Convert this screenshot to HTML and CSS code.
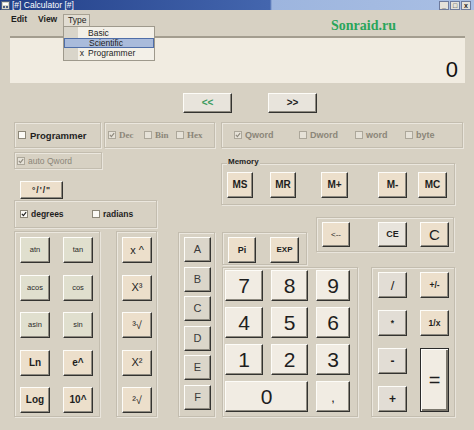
FILE: index.html
```html
<!DOCTYPE html>
<html lang="en">
<head>
    <meta charset="UTF-8">
    <title>[#] Calculator [#]</title>
    <link rel="stylesheet" href="styles.css">
</head>
<body>
    <div class="titlebar">
        <svg class="app-icon" width="9" height="9" viewBox="0 0 9 9"><rect x="0.5" y="0.5" width="8" height="8" fill="#d8d4c8" stroke="#50607f"/><rect x="2" y="2" width="5" height="2" fill="#ffffff"/><rect x="2" y="5" width="2" height="2" fill="#4a5d86"/><rect x="5" y="5" width="2" height="2" fill="#4a5d86"/></svg>
        <span class="title">[#] Calculator [#]</span>
        <div class="winbtns"><span>_</span><span>□</span><span>x</span></div>
    </div>

    <div class="menubar">
        <span class="menu-item m-edit">Edit</span>
        <span class="menu-item m-view">View</span>
        <span class="menu-item m-type">Type
            <div class="dropdown">
                <div class="dd-item"><span class="dd-mark"></span>Basic</div>
                <div class="dd-item sel"><span class="dd-mark"></span>Scientific</div>
                <div class="dd-item"><span class="dd-mark">x</span>Programmer</div>
            </div>
        </span>
        <span class="brand">Sonraid.ru</span>
    </div>

    <div class="display">0</div>

    <div class="nav">
        <button class="btn light nav-btn back">&lt;&lt;</button>
        <button class="btn light nav-btn">&gt;&gt;</button>
    </div>

    <div class="main">
        <div class="col-left">
            <div class="row-top">
                <div class="group prog"><span class="cb"></span><span class="prog-label">Programmer</span></div>
                <div class="group base">
                    <span class="opt w36"><span class="cb dis"><svg viewBox="0 0 7 7"><path d="M1 3.4l1.8 1.9L6 1.4"/></svg></span>Dec</span>
                    <span class="opt w32"><span class="cb dis"></span>Bin</span>
                    <span class="opt"><span class="cb dis"></span>Hex</span>
                </div>
            </div>
            <div class="group autoq"><span class="cb dis"><svg viewBox="0 0 7 7"><path d="M1 3.4l1.8 1.9L6 1.4"/></svg></span>auto Qword</div>
            <button class="btn tan dms">°/'/"</button>
            <div class="group angle">
                <span class="opt w72"><span class="cb"><svg viewBox="0 0 7 7"><path d="M1 3.4l1.8 1.9L6 1.4"/></svg></span>degrees</span>
                <span class="opt"><span class="cb"></span>radians</span>
            </div>
            <div class="keypad-left">
                <div class="group trig">
                    <button class="btn sage fn">atn</button>
                    <button class="btn sage fn">tan</button>
                    <button class="btn sage fn">acos</button>
                    <button class="btn sage fn">cos</button>
                    <button class="btn sage fn">asin</button>
                    <button class="btn sage fn">sin</button>
                    <button class="btn tan fn-b">Ln</button>
                    <button class="btn tan fn-b">e^</button>
                    <button class="btn tan fn-b">Log</button>
                    <button class="btn tan fn-b">10^</button>
                </div>
                <div class="group power">
                    <button class="btn tan pw">x ^</button>
                    <button class="btn tan pw">X³</button>
                    <button class="btn tan pw">³√</button>
                    <button class="btn tan pw">X²</button>
                    <button class="btn tan pw">²√</button>
                </div>
                <div class="group hex">
                    <button class="btn gray hx">A</button>
                    <button class="btn gray hx">B</button>
                    <button class="btn gray hx">C</button>
                    <button class="btn gray hx">D</button>
                    <button class="btn gray hx">E</button>
                    <button class="btn gray hx">F</button>
                </div>
            </div>
        </div>

        <div class="col-right">
            <div class="group words">
                <span class="opt w65"><span class="cb dis"><svg viewBox="0 0 7 7"><path d="M1 3.4l1.8 1.9L6 1.4"/></svg></span>Qword</span>
                <span class="opt w56"><span class="cb dis"></span>Dword</span>
                <span class="opt w50"><span class="cb dis"></span>word</span>
                <span class="opt"><span class="cb dis"></span>byte</span>
            </div>
            <div class="group memory">
                <span class="legend">Memory</span>
                <div class="mem-row">
                    <button class="btn tan mem w26">MS</button>
                    <button class="btn tan mem w26 ml17">MR</button>
                    <button class="btn tan mem w27 ml25">M+</button>
                    <button class="btn tan mem w29 ml30">M-</button>
                    <button class="btn tan mem w29 ml11">MC</button>
                </div>
            </div>
            <div class="row-edit">
                <div class="group consts">
                    <button class="btn tan pi">Pi</button>
                    <button class="btn tan exp">EXP</button>
                </div>
                <div class="group clear">
                    <button class="btn tan bs">&lt;--</button>
                    <button class="btn light ce">CE</button>
                    <button class="btn tan c">C</button>
                </div>
            </div>
            <div class="row-keys">
                <div class="group digits">
                    <button class="btn cream dg">7</button>
                    <button class="btn cream dg">8</button>
                    <button class="btn cream dg">9</button>
                    <button class="btn cream dg">4</button>
                    <button class="btn cream dg">5</button>
                    <button class="btn cream dg">6</button>
                    <button class="btn cream dg">1</button>
                    <button class="btn cream dg">2</button>
                    <button class="btn cream dg">3</button>
                    <button class="btn cream dg zero">0</button>
                    <button class="btn cream comma">,</button>
                </div>
                <div class="group ops">
                    <button class="btn stone op div">/</button>
                    <button class="btn tan op-s">+/-</button>
                    <button class="btn stone op-s">*</button>
                    <button class="btn tan op-s">1/x</button>
                    <button class="btn stone op">-</button>
                    <button class="btn cream eq">=</button>
                    <button class="btn stone op">+</button>
                </div>
            </div>
        </div>
    </div>
</body>
</html>
```

FILE: styles.css
```css
* { box-sizing: border-box; }
body { margin: 0; width: 474px; height: 430px; overflow: hidden; background: #d7d1c3; font-family: "Liberation Sans", Arial, sans-serif; color: #1e1e1e; }

/* window chrome */
.titlebar { height: 10px; display: flex; align-items: center; background: linear-gradient(90deg, #223f88 0px, #4466ae 270px, #9db5de 272px, #a9bfe4 474px); color: #fff; }
.app-icon { margin-left: 1px; flex: none; }
.title { margin-left: 2px; font-size: 8.5px; line-height: 10px; }
.winbtns { margin-left: auto; margin-right: 3px; display: flex; gap: 1px; }
.winbtns span { width: 10px; height: 9px; background: #e4e1da; border: 1px solid #6d7a9c; color: #222; font-size: 7px; line-height: 7px; text-align: center; font-weight: bold; }

.menubar { height: 26px; display: flex; align-items: flex-start; padding-left: 11px; font-size: 8.5px; }
.menu-item { margin-top: 4px; height: 12px; line-height: 11px; }
.m-edit { width: 27px; font-weight: bold; }
.m-view { width: 25px; font-weight: bold; }
.m-type { width: 27px; padding-left: 4px; position: relative; background: #e2ddd2; border: 1px solid #a7a193; border-bottom: none; }
.dropdown { position: absolute; left: -1px; top: 11px; width: 92px; height: 35px; padding: 1px 0; background: linear-gradient(90deg, #d9d5ca 0, #d9d5ca 14px, #f3f0e8 14px); border: 1px solid #9e998c; z-index: 2; }
.dd-item { height: 10px; line-height: 10px; display: flex; }
.dd-item.sel { background: #a9bbdb; border: 1px solid #4f6ea8; line-height: 8px; }
.dd-mark { width: 24px; text-align: right; padding-right: 4px; }
.brand { margin-left: 241px; margin-top: 9px; line-height: 14px; font-family: "Liberation Serif", serif; font-weight: bold; font-size: 14px; color: #2aa55b; }

.display { margin: 0 9px 0 10px; height: 47px; border-top: 2px solid #a39d8f; background: #f1ece1; display: flex; justify-content: flex-end; align-items: flex-end; padding: 0 7px 2px 0; font-size: 22px; line-height: 22px; color: #111; }

.nav { margin-top: 10px; display: flex; gap: 36px; padding-left: 183px; }
.nav-btn { width: 49px; height: 20px; font-size: 10px; font-weight: bold; }
.nav-btn.back { color: #3b9b5f; }

/* buttons */
button { font-family: inherit; padding: 0; margin: 0; cursor: default; }
.btn { border: 1px solid; border-color: #fdfcf8 #333330 #333330 #fdfcf8; box-shadow: inset -1px -1px 0 #8e8a80; color: #1e1e1e; display: flex; align-items: center; justify-content: center; line-height: 1; }
.sage { background: #e0dfce; }
.tan { background: #ecdfcb; }
.gray { background: #dbd6ca; }
.cream { background: #f1ece3; }
.stone { background: #e2ddd5; }
.light { background: #e8e4dc; }

/* group boxes and checkboxes */
.group { border: 1px solid #c3bdaf; box-shadow: inset 1px 1px 0 #ebe7de, 1px 1px 0 #e9e5dc; }
.cb { width: 8px; height: 8px; flex: none; border: 1px solid #8c8778; background: #fbfaf6; display: inline-flex; }
.cb.dis { background: #e6e2d8; border-color: #aca79a; }
.cb svg { width: 6px; height: 6px; }
.cb svg path { fill: none; stroke: #222; stroke-width: 1.4; }
.cb.dis svg path { stroke: #8f8a7e; }
.opt { display: flex; align-items: center; gap: 3px; }
.w32 { width: 32px; }
.w36 { width: 36px; }
.w50 { width: 50px; }
.w56 { width: 56px; }
.w65 { width: 65px; }
.w72 { width: 72px; }

.main { display: flex; gap: 6px; padding-left: 14px; margin-top: 9px; }
.col-left { width: 201px; display: flex; flex-direction: column; align-items: flex-start; }
.row-top { display: flex; gap: 3px; }
.prog { width: 87px; height: 26px; display: flex; align-items: center; gap: 4px; padding-left: 3px; }
.prog-label { font-weight: bold; font-size: 9.5px; }
.base { width: 111px; height: 26px; display: flex; align-items: center; padding-left: 3px; font-family: "Liberation Serif", serif; font-weight: bold; font-size: 9px; color: #8b8679; }
.autoq { margin-top: 4px; width: 88px; height: 17px; display: flex; align-items: center; gap: 3px; padding-left: 2px; font-size: 8.5px; color: #8b8679; }
.dms { margin-top: 12px; margin-left: 6px; width: 43px; height: 18px; font-size: 8.5px; font-weight: bold; letter-spacing: 1px; }
.angle { margin-top: 1px; width: 143px; height: 28px; display: flex; align-items: center; padding-left: 5px; font-size: 8.5px; font-weight: bold; }

.keypad-left { margin-top: 3px; display: flex; align-items: flex-start; }
.trig { width: 86px; height: 186px; padding: 5px 0 0 5px; display: grid; grid-template-columns: 30px 30px; grid-auto-rows: 26px; column-gap: 13px; row-gap: 11.5px; align-content: start; }
.fn { font-size: 7.5px; color: #2a2a2a; }
.fn-b { font-size: 10px; font-weight: bold; }
.power { margin-left: 16px; width: 41px; height: 186px; padding: 5px 0 0 5px; display: grid; grid-template-columns: 30px; grid-auto-rows: 26px; row-gap: 11.5px; align-content: start; }
.pw { font-size: 11px; }
.hex { margin-left: 21px; margin-top: 1px; width: 37px; height: 185px; padding: 4px 0 0 5px; display: grid; grid-template-columns: 27px; grid-auto-rows: 25px; row-gap: 4.6px; align-content: start; }
.hx { font-size: 11px; color: #3a3a3a; }

.col-right { width: 242px; display: flex; flex-direction: column; align-items: flex-start; }
.words { width: 242px; height: 26px; display: flex; align-items: center; padding-left: 12px; font-size: 9px; font-weight: bold; color: #8b8679; }
.memory { margin-top: 15px; width: 234px; height: 42px; padding-left: 5px; display: flex; flex-direction: column; align-items: flex-start; }
.legend { margin-top: -7px; padding: 0 1px; line-height: 9px; font-size: 8px; font-weight: bold; background: #d7d1c3; }
.mem-row { margin-top: 6px; display: flex; }
.mem { height: 26px; font-size: 10px; font-weight: bold; }
.w26 { width: 26px; }
.w27 { width: 27px; }
.w29 { width: 29px; }
.ml11 { margin-left: 11px; }
.ml17 { margin-left: 17px; }
.ml25 { margin-left: 25px; }
.ml30 { margin-left: 30px; }

.row-edit { margin-top: 12px; display: flex; align-items: flex-start; }
.consts { margin-top: 15px; margin-left: 1px; width: 85px; height: 33px; padding: 4px 0 0 5px; display: flex; gap: 14px; }
.pi { width: 28px; height: 26px; font-size: 9px; font-weight: bold; }
.exp { width: 29px; height: 26px; font-size: 8px; font-weight: bold; }
.clear { margin-left: 9px; width: 138px; height: 35px; padding: 4px 0 0 5px; display: flex; }
.bs { width: 28px; height: 25px; font-size: 8px; }
.ce { margin-left: 28px; width: 29px; height: 25px; font-size: 9px; font-weight: bold; }
.c { margin-left: 13px; width: 29px; height: 25px; font-size: 15px; }

.row-keys { margin-top: 2px; display: flex; align-items: flex-start; }
.digits { margin-left: 1px; width: 136px; height: 150px; padding: 2px 0 0 2px; display: grid; grid-template-columns: 38px 37px 34px; grid-auto-rows: 31px; column-gap: 8px; row-gap: 6px; align-content: start; }
.dg { font-size: 21px; }
.zero { grid-column: span 2; }
.comma { font-size: 9px; font-weight: bold; align-items: flex-end; padding-bottom: 7px; }
.ops { margin-left: 13px; width: 84px; height: 150px; padding: 4px 0 0 6px; display: grid; grid-template-columns: 29px 29px; grid-auto-rows: 26px; column-gap: 13px; row-gap: 12px; align-content: start; }
.op { font-size: 12px; font-weight: bold; }
.op.div { font-weight: normal; font-size: 13px; }
.op-s { font-size: 8.5px; font-weight: bold; }
.eq { grid-row: span 2; font-size: 20px; border: 1px solid #2a2a2a; box-shadow: inset 1px 1px 0 #fdfcf8, inset -2px -2px 0 #7a766c; }
```
